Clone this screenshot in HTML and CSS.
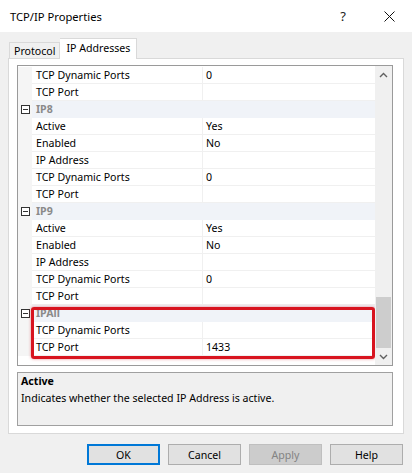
FILE: index.html
```html
<!doctype html>
<html lang="en">
<head>
    <meta charset="UTF-8">
    <meta name="viewport" content="width=device-width, initial-scale=1.0">
    <title>TCP/IP Properties</title>
    <link rel="stylesheet" href="styles.css">
</head>
<body>
    <div class="dialog">
        <div class="titlebar">
            <span class="title">TCP/IP Properties</span>
            <span class="tb-btn">?</span>
            <span class="tb-btn">
                <svg width="11" height="11" viewBox="0 0 11 11"><path d="M0.5 0.5 L10.5 10.5 M10.5 0.5 L0.5 10.5" stroke="#111" stroke-width="1"/></svg>
            </span>
        </div>
        <div class="content">
            <div class="tabs">
                <div class="tab">Protocol</div>
                <div class="tab active">IP Addresses</div>
            </div>
            <div class="panel">
                <div class="grid">
                    <div class="rows">
                        <div class="row"><span class="gutter"></span><span class="name">TCP Dynamic Ports</span><span class="value">0</span></div>
                        <div class="row"><span class="gutter"></span><span class="name">TCP Port</span><span class="value"></span></div>

                        <div class="row cat"><span class="gutter"><i class="minus"></i></span><span class="cat-name">IP8</span></div>
                        <div class="row"><span class="gutter"></span><span class="name">Active</span><span class="value">Yes</span></div>
                        <div class="row"><span class="gutter"></span><span class="name">Enabled</span><span class="value">No</span></div>
                        <div class="row"><span class="gutter"></span><span class="name">IP Address</span><span class="value"></span></div>
                        <div class="row"><span class="gutter"></span><span class="name">TCP Dynamic Ports</span><span class="value">0</span></div>
                        <div class="row"><span class="gutter"></span><span class="name">TCP Port</span><span class="value"></span></div>

                        <div class="row cat"><span class="gutter"><i class="minus"></i></span><span class="cat-name">IP9</span></div>
                        <div class="row"><span class="gutter"></span><span class="name">Active</span><span class="value">Yes</span></div>
                        <div class="row"><span class="gutter"></span><span class="name">Enabled</span><span class="value">No</span></div>
                        <div class="row"><span class="gutter"></span><span class="name">IP Address</span><span class="value"></span></div>
                        <div class="row"><span class="gutter"></span><span class="name">TCP Dynamic Ports</span><span class="value">0</span></div>
                        <div class="row"><span class="gutter"></span><span class="name">TCP Port</span><span class="value"></span></div>

                        <div class="group marked">
                            <div class="row cat"><span class="gutter"><i class="minus"></i></span><span class="cat-name">IPAll</span></div>
                            <div class="row"><span class="gutter"></span><span class="name">TCP Dynamic Ports</span><span class="value"></span></div>
                            <div class="row"><span class="gutter"></span><span class="name">TCP Port</span><span class="value">1433</span></div>
                        </div>
                    </div>
                    <div class="scrollbar">
                        <div class="arrow">
                            <svg width="9" height="6" viewBox="0 0 9 6"><path d="M1 5 L4.5 1.5 L8 5" fill="none" stroke="#606060" stroke-width="1.4"/></svg>
                        </div>
                        <div class="track"><div class="thumb"></div></div>
                        <div class="arrow">
                            <svg width="9" height="6" viewBox="0 0 9 6"><path d="M1 1 L4.5 4.5 L8 1" fill="none" stroke="#606060" stroke-width="1.4"/></svg>
                        </div>
                    </div>
                </div>
                <div class="desc">
                    <div class="desc-title">Active</div>
                    <div class="desc-text">Indicates whether the selected IP Address is active.</div>
                </div>
            </div>
            <div class="buttons">
                <button class="btn default">OK</button>
                <button class="btn">Cancel</button>
                <button class="btn disabled">Apply</button>
                <button class="btn">Help</button>
            </div>
        </div>
    </div>
</body>
</html>
```

FILE: styles.css
```css
body {
    margin: 0;
    font-family: "Noto Sans", "Open Sans", sans-serif;
    font-size: 10.6px;
    color: #000;
    background: #f0f0f0;
}
.dialog {
    width: 412px;
    height: 473px;
    background: #f0f0f0;
}
.titlebar {
    height: 32px;
    background: #fff;
    display: flex;
    align-items: center;
}
.title {
    flex: 1;
    padding-left: 10px;
    font-size: 11.2px;
}
.tb-btn {
    width: 46px;
    height: 32px;
    display: flex;
    align-items: center;
    justify-content: center;
    font-size: 13px;
    color: #222;
}
.content {
    padding: 6px 9px 0 8px;
}
.tabs {
    display: flex;
    align-items: flex-end;
    padding-left: 1px;
}
.tab {
    height: 15px;
    line-height: 16px;
    padding: 0 4px;
    border: 1px solid #d9d9d9;
    border-bottom: none;
    background: #f0f0f0;
}
.tab.active {
    height: 20px;
    line-height: 18px;
    padding: 0 6px;
    background: #fff;
    border-left: none;
    margin-bottom: -1px;
    position: relative;
    z-index: 1;
}
.panel {
    width: 376px;
    background: #fff;
    border: 1px solid #d9d9d9;
    padding: 6px 10px 7px 8px;
}
.grid {
    display: flex;
    height: 299px;
    border: 1px solid #9a9a9a;
    background: #fff;
}
.rows {
    width: 357px;
    padding-top: 1px;
    overflow: hidden;
}
.row {
    display: grid;
    grid-template-columns: 14px 171px 1fr;
    height: 17px;
}
.gutter {
    background: #f5f5f5;
    display: flex;
    align-items: center;
    justify-content: center;
}
.name,
.value {
    line-height: 16px;
    border-bottom: 1px solid #f0f0f0;
    white-space: nowrap;
}
.name {
    padding-left: 4px;
    border-right: 1px solid #f0f0f0;
}
.value {
    padding-left: 3px;
}
.cat-name {
    grid-column: 2 / 4;
    background: #f0f3f8;
    color: #8a8a8a;
    font-weight: bold;
    padding-left: 4px;
    line-height: 17px;
}
.minus {
    display: block;
    width: 7px;
    height: 7px;
    border: 1px solid #333;
    background: #fff linear-gradient(#333, #333) center / 5px 1px no-repeat;
}
.group {
    position: relative;
}
.marked::after {
    content: "";
    position: absolute;
    top: 2px;
    left: 13px;
    right: 0;
    bottom: -3px;
    border: 3px solid #d8141f;
    border-radius: 3px;
    box-shadow: 0 0 3px rgba(216, 20, 31, 0.5);
}
.scrollbar {
    width: 17px;
    background: #f0f0f0;
    display: flex;
    flex-direction: column;
}
.arrow {
    height: 17px;
    display: flex;
    align-items: center;
    justify-content: center;
}
.track {
    flex: 1;
    display: flex;
    flex-direction: column;
    justify-content: flex-end;
}
.thumb {
    height: 51px;
    margin: 0 1px;
    background: #cdcdcd;
}
.desc {
    margin-top: 6px;
    height: 52px;
    border: 1px solid #a0a0a0;
    background: #f0f0f0;
    padding: 0 3px;
}
.desc-title {
    font-weight: bold;
    margin-top: 1px;
    line-height: 15px;
}
.desc-text {
    margin-top: 2px;
    line-height: 15px;
}
.buttons {
    display: flex;
    justify-content: flex-end;
    gap: 8px;
    margin-top: 10px;
}
.btn {
    width: 73px;
    height: 21px;
    font-family: inherit;
    font-size: 10.6px;
    background: #e1e1e1;
    border: 1px solid #adadad;
    padding: 0;
}
.btn.default {
    border: 2px solid #0078d7;
}
.btn.disabled {
    background: #cccccc;
    border-color: #bfbfbf;
    color: #838383;
}
```
